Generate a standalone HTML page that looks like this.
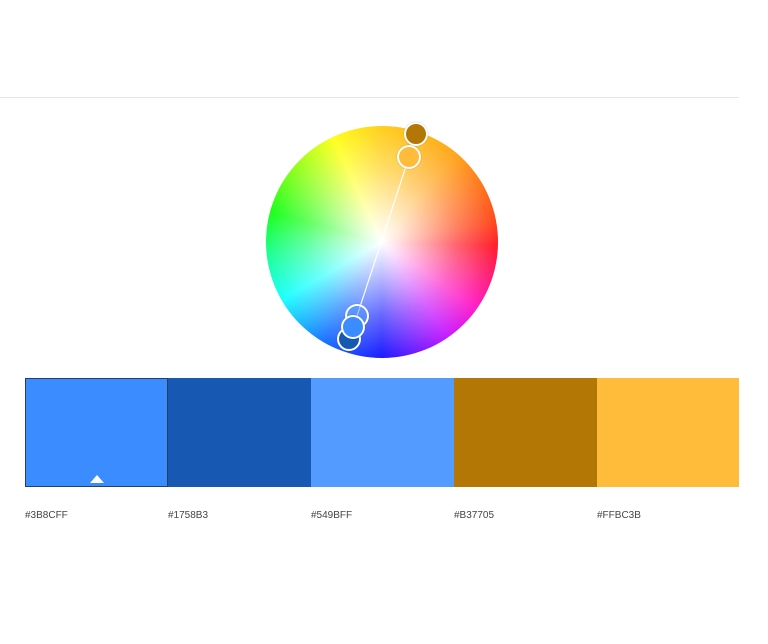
<!DOCTYPE html><html><head><style>
body{margin:0;width:768px;height:644px;background:#fff;position:relative;overflow:hidden;font-family:"Liberation Sans",sans-serif}
.line{position:absolute;left:0;top:97px;width:739px;height:1px;background:#e6e6e6}
.wheel{position:absolute;left:266px;top:126px;width:232px;height:232px;border-radius:50%;
background:radial-gradient(circle,#fff 0%,rgba(255,255,255,.85) 12%,rgba(255,255,255,.4) 45%,rgba(255,255,255,0) 80%),
conic-gradient(#ffc800 0deg,#ff9a00 40deg,#ff3000 80deg,#ff0010 92deg,#ff00c0 125deg,#c000ff 145deg,#0000ff 180deg,#0060ff 210deg,#00ffff 240deg,#00ff80 265deg,#00ff00 285deg,#80ff00 310deg,#ffff00 335deg,#ffc800 360deg)}
.sw{position:absolute;top:378px;height:109px;width:143px}
.lab{position:absolute;top:510px;font-size:10px;color:#444}
.c{position:absolute;width:20px;height:20px;border:2px solid #fff;border-radius:50%;box-shadow:0 0 1px rgba(0,0,0,.4)}
</style></head><body>
<div class="line"></div>
<div class="wheel"></div>
<svg style="position:absolute;left:0;top:0" width="768" height="644"><line x1="409" y1="157" x2="357" y2="316" stroke="#fff" stroke-width="1.2"/></svg>
<div class="c" style="left:337px;top:327px;background:#1758B3"></div>
<div class="c" style="left:345px;top:304px;background:rgba(84,155,255,.5)"></div>
<div class="c" style="left:341px;top:315px;background:#3B8CFF"></div>
<div class="c" style="left:404px;top:122px;background:#B37705"></div>
<div class="c" style="left:397px;top:145px;background:#FFBC3B"></div>
<div class="sw" style="left:25px;background:#3B8CFF;box-sizing:border-box;border:1px solid #2a3f5f"></div>
<div style="position:absolute;left:90px;top:475px;width:0;height:0;border-left:7px solid transparent;border-right:7px solid transparent;border-bottom:8px solid #fff"></div>
<div class="sw" style="left:168px;background:#1758B3"></div>
<div class="sw" style="left:311px;background:#549BFF"></div>
<div class="sw" style="left:454px;background:#B37705"></div>
<div class="sw" style="left:597px;width:142px;background:#FFBC3B"></div>
<div class="lab" style="left:25px">#3B8CFF</div>
<div class="lab" style="left:168px">#1758B3</div>
<div class="lab" style="left:311px">#549BFF</div>
<div class="lab" style="left:454px">#B37705</div>
<div class="lab" style="left:597px">#FFBC3B</div>
</body></html>
